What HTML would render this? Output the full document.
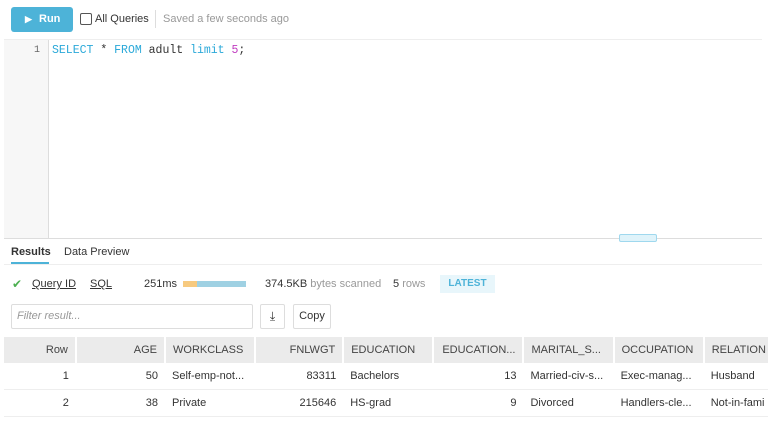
<!DOCTYPE html><html><head><style>
body{margin:0;width:768px;height:422px;background:#fff;font-family:"Liberation Sans",sans-serif;position:relative;overflow:hidden;font-size:11px;color:#333}
.a{position:absolute;white-space:nowrap}
.mono{font-family:"Liberation Mono",monospace}
table{border-collapse:collapse;position:absolute;left:4px;top:337px;font-size:11px;table-layout:fixed;width:800px}
td{height:26px;padding:0 7px;white-space:nowrap;overflow:hidden;border-bottom:1px solid #eee}
th{height:26px;background:#ebebeb;font-weight:normal;padding:0 7px;border-right:2px solid #fff;text-align:left;color:#444;white-space:nowrap;overflow:hidden}
.r{text-align:right}
</style></head><body>
<div class="a" style="left:11px;top:7px;width:62px;height:25px;background:#4db3d8;border-radius:3px;color:#fff;font-weight:bold;font-size:11px;line-height:25px"><span style="position:absolute;left:14px;font-size:9px">▶</span><span style="position:absolute;left:28px">Run</span></div>
<div class="a" style="left:80px;top:13px;width:10px;height:10px;border:1px solid #555;border-radius:2px"></div>
<div class="a" style="left:95px;top:13px">All Queries</div>
<div class="a" style="left:155px;top:10px;width:1px;height:18px;background:#ddd"></div>
<div class="a" style="left:163px;top:13px;color:#999">Saved a few seconds ago</div>
<div class="a" style="left:4px;top:39px;width:758px;height:1px;background:#eee"></div>
<div class="a" style="left:4px;top:40px;width:44px;height:198px;background:#f7f7f7;border-right:1px solid #ddd"></div>
<div class="a mono" style="left:34px;top:45px;font-size:10px;color:#666">1</div>
<div class="a mono" style="left:52px;top:44px;font-size:11.5px"><span style="color:#2ba9d9">SELECT</span> * <span style="color:#2ba9d9">FROM</span> adult <span style="color:#2ba9d9">limit</span> <span style="color:#c03cc0">5</span>;</div>
<div class="a" style="left:4px;top:238px;width:758px;height:1px;background:#ddd"></div>
<div class="a" style="left:619px;top:234px;width:36px;height:6px;border:1px solid #9fd8ee;background:#dff3fa;border-radius:2px"></div>
<div class="a" style="left:11px;top:246px;font-weight:bold">Results</div>
<div class="a" style="left:64px;top:246px">Data Preview</div>
<div class="a" style="left:11px;top:262px;width:38px;height:2px;background:#4db3d8"></div>
<div class="a" style="left:4px;top:264px;width:758px;height:1px;background:#eee"></div>
<div class="a" style="left:12px;top:277px;color:#4caf50;font-size:12px">✔</div>
<div class="a" style="left:32px;top:278px;text-decoration:underline">Query ID</div>
<div class="a" style="left:90px;top:278px;text-decoration:underline">SQL</div>
<div class="a" style="left:144px;top:278px">251ms</div>
<div class="a" style="left:183px;top:281px;width:14px;height:6px;background:#f7ca7f"></div>
<div class="a" style="left:197px;top:281px;width:49px;height:6px;background:#9fd1e3"></div>
<div class="a" style="left:265px;top:278px">374.5KB <span style="color:#999">bytes scanned</span></div>
<div class="a" style="left:393px;top:278px">5 <span style="color:#999">rows</span></div>
<div class="a" style="left:440px;top:275px;width:55px;height:18px;background:#e8f6fb;color:#4db3d8;font-weight:bold;font-size:10px;line-height:18px;text-align:center">LATEST</div>
<div class="a" style="left:11px;top:304px;width:240px;height:23px;border:1px solid #ddd;border-radius:2px;color:#999;font-style:italic;line-height:23px;text-indent:5px">Filter result...</div>
<div class="a" style="left:260px;top:304px;width:23px;height:23px;border:1px solid #ddd;border-radius:2px;text-align:center;line-height:23px;font-size:12px">⤓</div>
<div class="a" style="left:293px;top:304px;width:36px;height:23px;border:1px solid #ddd;border-radius:2px;text-align:center;line-height:23px">Copy</div>
<table>
<colgroup><col style="width:71px"><col style="width:88px"><col style="width:89px"><col style="width:87px"><col style="width:89px"><col style="width:89px"><col style="width:89px"><col style="width:89px"><col style="width:99px"></colgroup>
<tr><th class="r">Row</th><th class="r">AGE</th><th>WORKCLASS</th><th class="r">FNLWGT</th><th>EDUCATION</th><th class="r">EDUCATION...</th><th>MARITAL_S...</th><th>OCCUPATION</th><th style="border-right:0">RELATION</th></tr>
<tr><td class="r">1</td><td class="r">50</td><td>Self-emp-not...</td><td class="r">83311</td><td>Bachelors</td><td class="r">13</td><td>Married-civ-s...</td><td>Exec-manag...</td><td>Husband</td></tr>
<tr><td class="r">2</td><td class="r">38</td><td>Private</td><td class="r">215646</td><td>HS-grad</td><td class="r">9</td><td>Divorced</td><td>Handlers-cle...</td><td>Not-in-fami</td></tr>
</table>
</body></html>
